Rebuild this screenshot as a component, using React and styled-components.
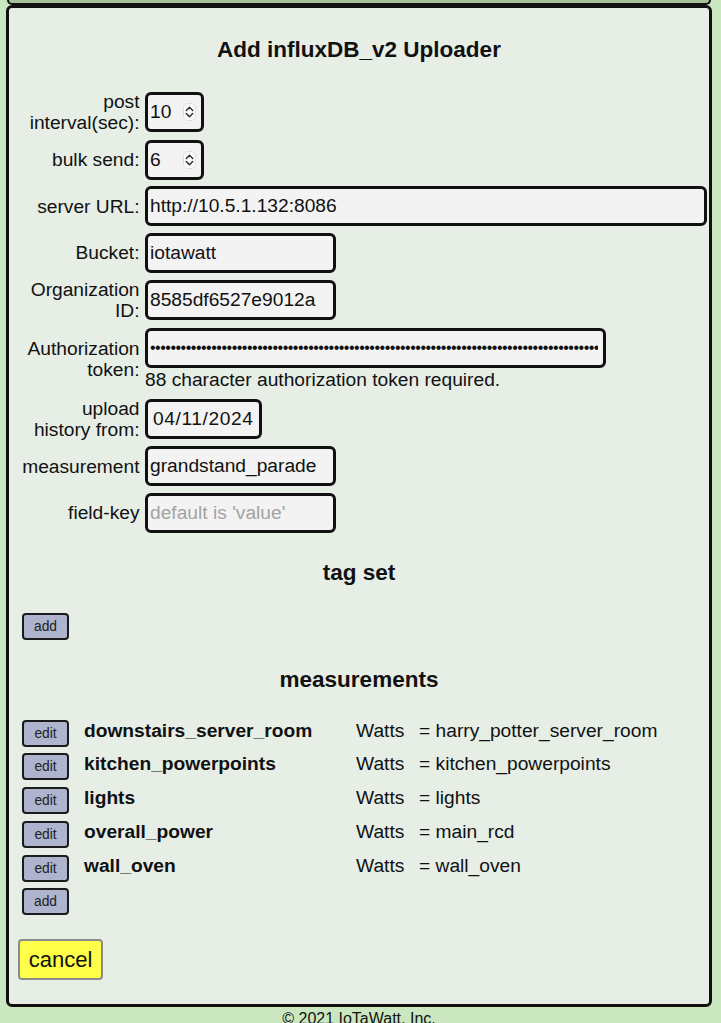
import React from 'react';
import styled, { createGlobalStyle } from 'styled-components';

const GlobalStyle = createGlobalStyle`
  html, body {
    margin: 0;
    padding: 0;
  }
  body {
    background: #cbe7bf;
    font-family: "Liberation Sans", Arial, Helvetica, sans-serif;
    font-size: 19.2px;
    color: #111;
  }
`;

const settings = [
  { label: 'post interval(sec):', kind: 'number', value: '10' },
  { label: 'bulk send:', kind: 'number', value: '6' },
  { label: 'server URL:', value: 'http://10.5.1.132:8086', width: 562 },
  { label: 'Bucket:', value: 'iotawatt', width: 191 },
  { label: 'Organization ID:', value: '8585df6527e9012a', width: 191 },
  {
    label: 'Authorization token:',
    kind: 'secret',
    value: '\u2022'.repeat(88),
    width: 461,
    help: '88 character authorization token required.',
  },
  { label: 'upload history from:', kind: 'date', value: '04/11/2024', width: 117 },
  { label: 'measurement', value: 'grandstand_parade', width: 191 },
  { label: 'field-key', value: '', placeholder: "default is 'value'", width: 191 },
];

const measurements = [
  { name: 'downstairs_server_room', units: 'Watts', script: 'harry_potter_server_room' },
  { name: 'kitchen_powerpoints', units: 'Watts', script: 'kitchen_powerpoints' },
  { name: 'lights', units: 'Watts', script: 'lights' },
  { name: 'overall_power', units: 'Watts', script: 'main_rcd' },
  { name: 'wall_oven', units: 'Watts', script: 'wall_oven' },
];

// little up/down stepper drawn like the native one
const Spinner = () => (
  <svg width="13" height="18" viewBox="0 0 13 18">
    <rect x="0.5" y="0.5" width="12" height="17" rx="4.5" fill="#fbfbfb" stroke="#dedede" />
    <path d="M3.3 7.4 L6.5 4.2 L9.7 7.4" fill="none" stroke="#2a2a2a" strokeWidth="1.4" strokeLinecap="round" strokeLinejoin="round" />
    <path d="M3.3 10.6 L6.5 13.8 L9.7 10.6" fill="none" stroke="#2a2a2a" strokeWidth="1.4" strokeLinecap="round" strokeLinejoin="round" />
  </svg>
);

const Field = ({ item }) => {
  if (item.kind === 'number') {
    return (
      <NumberBox>
        <BareInput type="text" defaultValue={item.value} />
        <Spinner />
      </NumberBox>
    );
  }
  return (
    <FieldStack>
      <TextInput
        type="text"
        $w={item.width}
        $kind={item.kind}
        defaultValue={item.value}
        placeholder={item.placeholder}
      />
      {item.help && <Help>{item.help}</Help>}
    </FieldStack>
  );
};

const App = () => {
  return (
    <Page>
      <GlobalStyle />
      <PrevPanel />
      <Panel>
        <Heading>Add influxDB_v2 Uploader</Heading>
        <Form>
          {settings.map((item) => (
            <Row key={item.label}>
              <Label>{item.label}</Label>
              <Field item={item} />
            </Row>
          ))}
        </Form>

        <Heading $gap>tag set</Heading>
        <ButtonArea>
          <SmallButton>add</SmallButton>
        </ButtonArea>

        <Heading $gap>measurements</Heading>
        <MeasureList>
          {measurements.map((m) => (
            <MeasureRow key={m.name}>
              <SmallButton>edit</SmallButton>
              <MeasureName>{m.name}</MeasureName>
              <MeasureCell>{m.units}</MeasureCell>
              <MeasureCell>= {m.script}</MeasureCell>
            </MeasureRow>
          ))}
          <MeasureRow>
            <SmallButton>add</SmallButton>
          </MeasureRow>
        </MeasureList>

        <CancelArea>
          <CancelButton>cancel</CancelButton>
        </CancelArea>
      </Panel>
      <Footer>© 2021 IoTaWatt, Inc.</Footer>
    </Page>
  );
};

const Page = styled.div`
  padding: 0 9px 0 6px;
`;

const PrevPanel = styled.div`
  height: 3px;
  margin: 0 1px;
  background: #a9c19b;
  border: 2px solid #111;
  border-top: none;
  border-radius: 0 0 6px 6px;
`;

const Panel = styled.div`
  background: #e6eee6;
  border: 3px solid #111;
  border-radius: 6px;
  padding: 29px 0 24px 0;
`;

const Heading = styled.h3`
  margin: ${({ $gap }) => ($gap ? '27px 0' : '0')};
  font-size: 22.5px;
  line-height: 26px;
  font-weight: 700;
  text-align: center;
`;

const Form = styled.div`
  display: flex;
  flex-direction: column;
  gap: 6.6px;
  margin-top: 28px;
  padding-left: 12px;
`;

const Row = styled.div`
  display: grid;
  grid-template-columns: 118.5px auto;
  column-gap: 5.5px;
  align-items: center;
`;

const Label = styled.label`
  text-align: right;
  line-height: 21px;
`;

const FieldStack = styled.div`
  display: flex;
  flex-direction: column;
  align-items: flex-start;
`;

const TextInput = styled.input`
  box-sizing: border-box;
  width: ${({ $w }) => $w}px;
  height: 40px;
  margin: 0;
  padding: 0 5px 0 ${({ $kind }) => ($kind === 'date' ? 5 : 2)}px;
  border: 3px solid #111;
  border-radius: 6px;
  background: #f3f3f3;
  font-family: inherit;
  font-size: ${({ $kind }) => ($kind === 'secret' ? '16px' : '19.2px')};
  letter-spacing: ${({ $kind }) => ($kind === 'secret' ? '-0.5px' : $kind === 'date' ? '0.6px' : '0')};
  color: #111;
  outline: none;

  &::placeholder {
    color: #a3a3a3;
  }
`;

const NumberBox = styled.div`
  box-sizing: border-box;
  width: 59px;
  height: 40px;
  display: flex;
  align-items: center;
  padding: 0 5px 0 2px;
  border: 3px solid #111;
  border-radius: 6px;
  background: #f3f3f3;
`;

const BareInput = styled.input`
  flex: 1;
  min-width: 0;
  margin: 0;
  padding: 0;
  border: none;
  background: transparent;
  font-family: inherit;
  font-size: 19.2px;
  color: #111;
  outline: none;
`;

const Help = styled.div`
  line-height: 22px;
  margin-top: 1px;
`;

const ButtonArea = styled.div`
  padding-left: 13px;
`;

const SmallButton = styled.button`
  box-sizing: border-box;
  width: 47px;
  height: 27px;
  margin: 0;
  padding: 0;
  background: #aeb4cd;
  border: 2px solid #1b1b1b;
  border-radius: 4px;
  font-family: inherit;
  font-size: 13.8px;
  color: #222;
`;

const MeasureList = styled.div`
  display: flex;
  flex-direction: column;
  gap: 6.7px;
  padding-left: 13px;
`;

const MeasureRow = styled.div`
  display: grid;
  grid-template-columns: 62px 272px 63px 1fr;
  align-items: start;
  height: 27px;
`;

const MeasureCell = styled.span`
  line-height: 22px;
  white-space: nowrap;
`;

const MeasureName = styled(MeasureCell)`
  font-weight: 700;
`;

const CancelArea = styled.div`
  margin-top: 24px;
  padding-left: 9px;
`;

const CancelButton = styled.button`
  box-sizing: border-box;
  width: 85px;
  height: 41px;
  margin: 0;
  padding: 0;
  background: #ffff4a;
  border: 2px solid #8c8c8c;
  border-radius: 4px;
  font-family: inherit;
  font-size: 22px;
  color: #111;
`;

const Footer = styled.div`
  padding-top: 3px;
  font-size: 16px;
  text-align: center;
`;

export default App;
